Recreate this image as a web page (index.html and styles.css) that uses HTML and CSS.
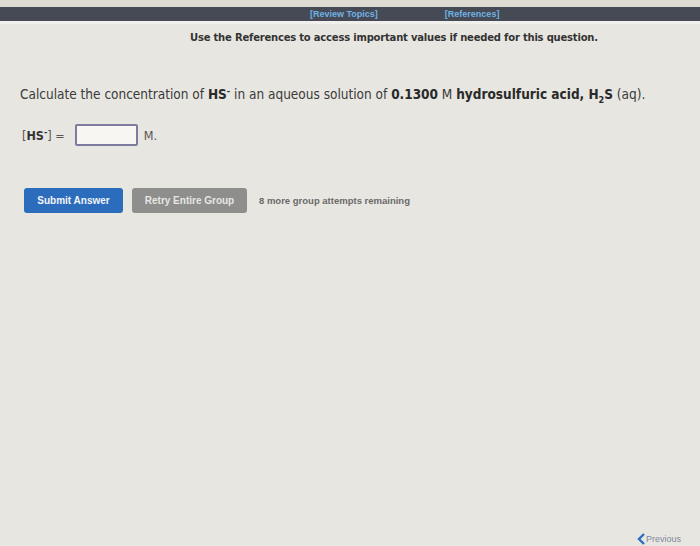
FILE: index.html
```html
<!DOCTYPE html>
<html>
<head>
<meta charset="utf-8">
<link rel="stylesheet" href="styles.css">
</head>
<body>
<div class="page">
  <div class="topstrip"></div>
  <div class="bar">
    <a class="link link-review">[Review Topics]</a>
    <a class="link link-refs">[References]</a>
  </div>
  <div class="barshine"></div>
  <div class="note">Use the References to access important values if needed for this question.</div>
  <div class="question">Calculate the concentration of <b>HS<sup>-</sup></b> in an aqueous solution of <b>0.1300</b> M <b>hydrosulfuric acid, H<sub>2</sub>S</b> (aq).</div>
  <div class="answer">
    <span class="label">[<b>HS<sup>-</sup></b>] =</span>
    <span class="input"></span>
    <span class="unit">M.</span>
  </div>
  <div class="actions">
    <span class="btn btn-submit">Submit Answer</span>
    <span class="btn btn-retry">Retry Entire Group</span>
    <span class="remaining">8 more group attempts remaining</span>
  </div>
  <div class="spacer"></div>
  <div class="footer">
    <span class="prev"><svg class="chev" width="8" height="12" viewBox="0 0 8 12"><path d="M7 1 L2 6 L7 11" fill="none" stroke="#2b6fc0" stroke-width="2.4"/></svg>Previous</span>
  </div>
</div>
</body>
</html>
```
FILE: styles.css
```css
html, body {
  margin: 0;
  padding: 0;
}
body {
  background: #e8e6e1;
  font-family: "DejaVu Sans", Verdana, sans-serif;
  color: #2e2e2e;
}
.page {
  width: 700px;
  height: 546px;
  display: flex;
  flex-direction: column;
  overflow: hidden;
}
.topstrip {
  height: 7px;
  background: #dedbd3;
}
.bar {
  height: 14px;
  background: #464a54;
  display: flex;
  align-items: center;
  padding-left: 310px;
  gap: 67px;
}
.barshine {
  height: 3px;
  background: #f1f0ec;
}
.link {
  color: #6fb2e4;
  font-family: "Liberation Sans", Arial, sans-serif;
  font-weight: bold;
  font-size: 9px;
}
.note {
  padding-left: 190px;
  margin-top: 8px;
  font-size: 10px;
  font-weight: bold;
  letter-spacing: -0.2px;
  color: #333;
}
.question {
  margin-top: 43px;
  padding-left: 20px;
  font-size: 13.5px;
  color: #3a3a3a;
  font-family: "DejaVu Sans Condensed", "DejaVu Sans", sans-serif;
}
.question b {
  color: #2a2a2a;
}
sup, sub {
  font-size: 9px;
  line-height: 0;
}
.answer {
  margin-top: 22px;
  padding-left: 22px;
  display: flex;
  align-items: center;
  font-family: "DejaVu Sans Condensed", "DejaVu Sans", sans-serif;
  font-size: 12.5px;
  color: #555;
}
.label b { color: #333; }
.input {
  width: 59px;
  height: 18px;
  border: 2px solid #7d7b9e;
  border-radius: 2px;
  background: #f7f6f3;
  margin-left: 10px;
  margin-right: 6px;
}
.actions {
  margin-top: 42px;
  padding-left: 24px;
  display: flex;
  align-items: center;
}
.btn {
  display: flex;
  align-items: center;
  justify-content: center;
  height: 25px;
  border-radius: 3px;
  color: #f2f4f8;
  font-family: "Liberation Sans", Arial, sans-serif;
  font-weight: bold;
  font-size: 10px;
}
.btn-submit {
  width: 99px;
  background: #2b6cbd;
}
.btn-retry {
  width: 115px;
  background: #8e8e8c;
  margin-left: 9px;
  color: #e6e6e4;
}
.remaining {
  margin-left: 12px;
  font-family: "Liberation Sans", Arial, sans-serif;
  font-weight: bold;
  font-size: 9.5px;
  color: #6a6a6a;
}
.spacer {
  flex: 1;
}
.footer {
  display: flex;
  justify-content: flex-end;
  padding-right: 19px;
  height: 14px;
}
.prev {
  display: flex;
  align-items: center;
  gap: 1px;
  font-family: "Liberation Sans", Arial, sans-serif;
  font-size: 9px;
  color: #7f8a9c;
}
```
